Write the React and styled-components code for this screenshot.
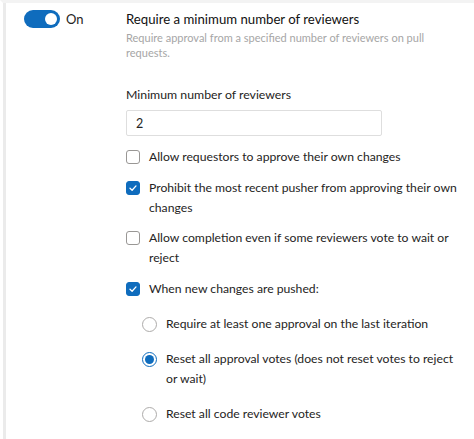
import React, { useState } from 'react'
import styled, { createGlobalStyle } from 'styled-components'

const GlobalStyle = createGlobalStyle`
  html, body {
    margin: 0;
    padding: 0;
    background: #ffffff;
  }
  body {
    font-family: Lato, "Noto Sans", sans-serif;
    color: #252423;
  }
`

const Page = styled.div`
  width: 474px;
  height: 439px;
  box-sizing: border-box;
  border-top: 3px solid #f3f3f3;
  border-left: 3px solid #ffffff;
  position: relative;
  overflow: hidden;

  &::before {
    content: '';
    position: absolute;
    left: 0;
    top: 0;
    bottom: 0;
    width: 3px;
    background: #ebebeb;
  }
`

const Row = styled.div`
  display: flex;
  align-items: flex-start;
  padding: 6px 0 0 21px;
`

const ToggleCol = styled.div`
  width: 102px;
  display: flex;
  align-items: center;
  gap: 6px;
  padding-top: 1px;
`

const Track = styled.button`
  width: 36px;
  height: 18px;
  border-radius: 9px;
  border: none;
  padding: 0 3px;
  background: ${p => (p.$on ? '#0f6cbd' : '#c8c8c8')};
  display: flex;
  align-items: center;
  justify-content: ${p => (p.$on ? 'flex-end' : 'flex-start')};
  cursor: pointer;
`

const Knob = styled.span`
  width: 12px;
  height: 12px;
  border-radius: 50%;
  background: #ffffff;
`

const ToggleLabel = styled.span`
  font-size: 13px;
  color: #252423;
`

const Content = styled.div`
  width: 338px;
  display: flex;
  flex-direction: column;
`

const Title = styled.div`
  font-size: 13.2px;
  line-height: 20px;
  color: #111;
`

const Subtitle = styled.div`
  max-width: 300px;
  font-size: 11px;
  line-height: 15px;
  color: #a6a6a6;
  margin-top: 1px;
`

const FieldLabel = styled.div`
  font-size: 12.3px;
  line-height: 20px;
  margin-top: 25px;
`

const Input = styled.input`
  width: 256px;
  height: 26px;
  box-sizing: border-box;
  margin-top: 5px;
  border: 1px solid #dedede;
  border-radius: 2px;
  padding: 0 9px;
  font-family: inherit;
  font-size: 12.5px;
  color: #252423;
  outline: none;
`

const Options = styled.div`
  display: flex;
  flex-direction: column;
  gap: ${p => p.$gap}px;
  margin-top: ${p => p.$top}px;
  padding-left: ${p => p.$indent || 0}px;
`

const Option = styled.label`
  display: flex;
  align-items: flex-start;
  gap: 9px;
  font-size: 12.2px;
  line-height: 20px;
  color: #252423;
  cursor: pointer;
`

const Box = styled.span`
  flex: none;
  width: 14px;
  height: 14px;
  margin-top: 3px;
  box-sizing: border-box;
  border-radius: 3px;
  border: 1px solid ${p => (p.$checked ? '#0f6cbd' : '#999795')};
  background: ${p => (p.$checked ? '#0f6cbd' : '#fff')};
  display: flex;
  align-items: center;
  justify-content: center;
`

const Radio = styled.span`
  flex: none;
  width: 15px;
  height: 15px;
  margin-top: 2.5px;
  box-sizing: border-box;
  border-radius: 50%;
  border: 1px solid ${p => (p.$checked ? '#0f6cbd' : '#adabaa')};
  display: flex;
  align-items: center;
  justify-content: center;

  &::after {
    content: '';
    width: 9px;
    height: 9px;
    border-radius: 50%;
    background: ${p => (p.$checked ? '#0f6cbd' : 'transparent')};
  }
`

const Check = () => (
  <svg width="10" height="10" viewBox="0 0 10 10">
    <path d="M2 5.2 L4.1 7.2 L8 2.9" fill="none" stroke="#fff" strokeWidth="1.3" strokeLinecap="round" strokeLinejoin="round" />
  </svg>
)

const checks = [
  { id: 'own', text: 'Allow requestors to approve their own changes', on: false },
  { id: 'pusher', text: 'Prohibit the most recent pusher from approving their own changes', on: true },
  { id: 'wait', text: 'Allow completion even if some reviewers vote to wait or reject', on: false },
  { id: 'pushed', text: 'When new changes are pushed:', on: true },
]

const radios = [
  'Require at least one approval on the last iteration',
  'Reset all approval votes (does not reset votes to reject or wait)',
  'Reset all code reviewer votes',
]

const App = () => {
  const [enabled, setEnabled] = useState(true)
  const [value, setValue] = useState('2')
  const [state, setState] = useState(Object.fromEntries(checks.map(c => [c.id, c.on])))
  const [choice, setChoice] = useState(1)

  return (
    <Page>
      <GlobalStyle />
      <Row>
        <ToggleCol>
          <Track $on={enabled} onClick={() => setEnabled(!enabled)}>
            <Knob />
          </Track>
          <ToggleLabel>{enabled ? 'On' : 'Off'}</ToggleLabel>
        </ToggleCol>
        <Content>
          <Title>Require a minimum number of reviewers</Title>
          <Subtitle>Require approval from a specified number of reviewers on pull requests.</Subtitle>
          <FieldLabel>Minimum number of reviewers</FieldLabel>
          <Input value={value} onChange={e => setValue(e.target.value)} />
          <Options $gap={10.5} $top={11}>
            {checks.map(c => (
              <Option key={c.id} onClick={() => setState({ ...state, [c.id]: !state[c.id] })}>
                <Box $checked={state[c.id]}>{state[c.id] && <Check />}</Box>
                <span>{c.text}</span>
              </Option>
            ))}
          </Options>
          <Options $gap={15} $top={15.5} $indent={16}>
            {radios.map((r, i) => (
              <Option key={r} onClick={() => setChoice(i)}>
                <Radio $checked={choice === i} />
                <span>{r}</span>
              </Option>
            ))}
          </Options>
        </Content>
      </Row>
    </Page>
  )
}

export default App
